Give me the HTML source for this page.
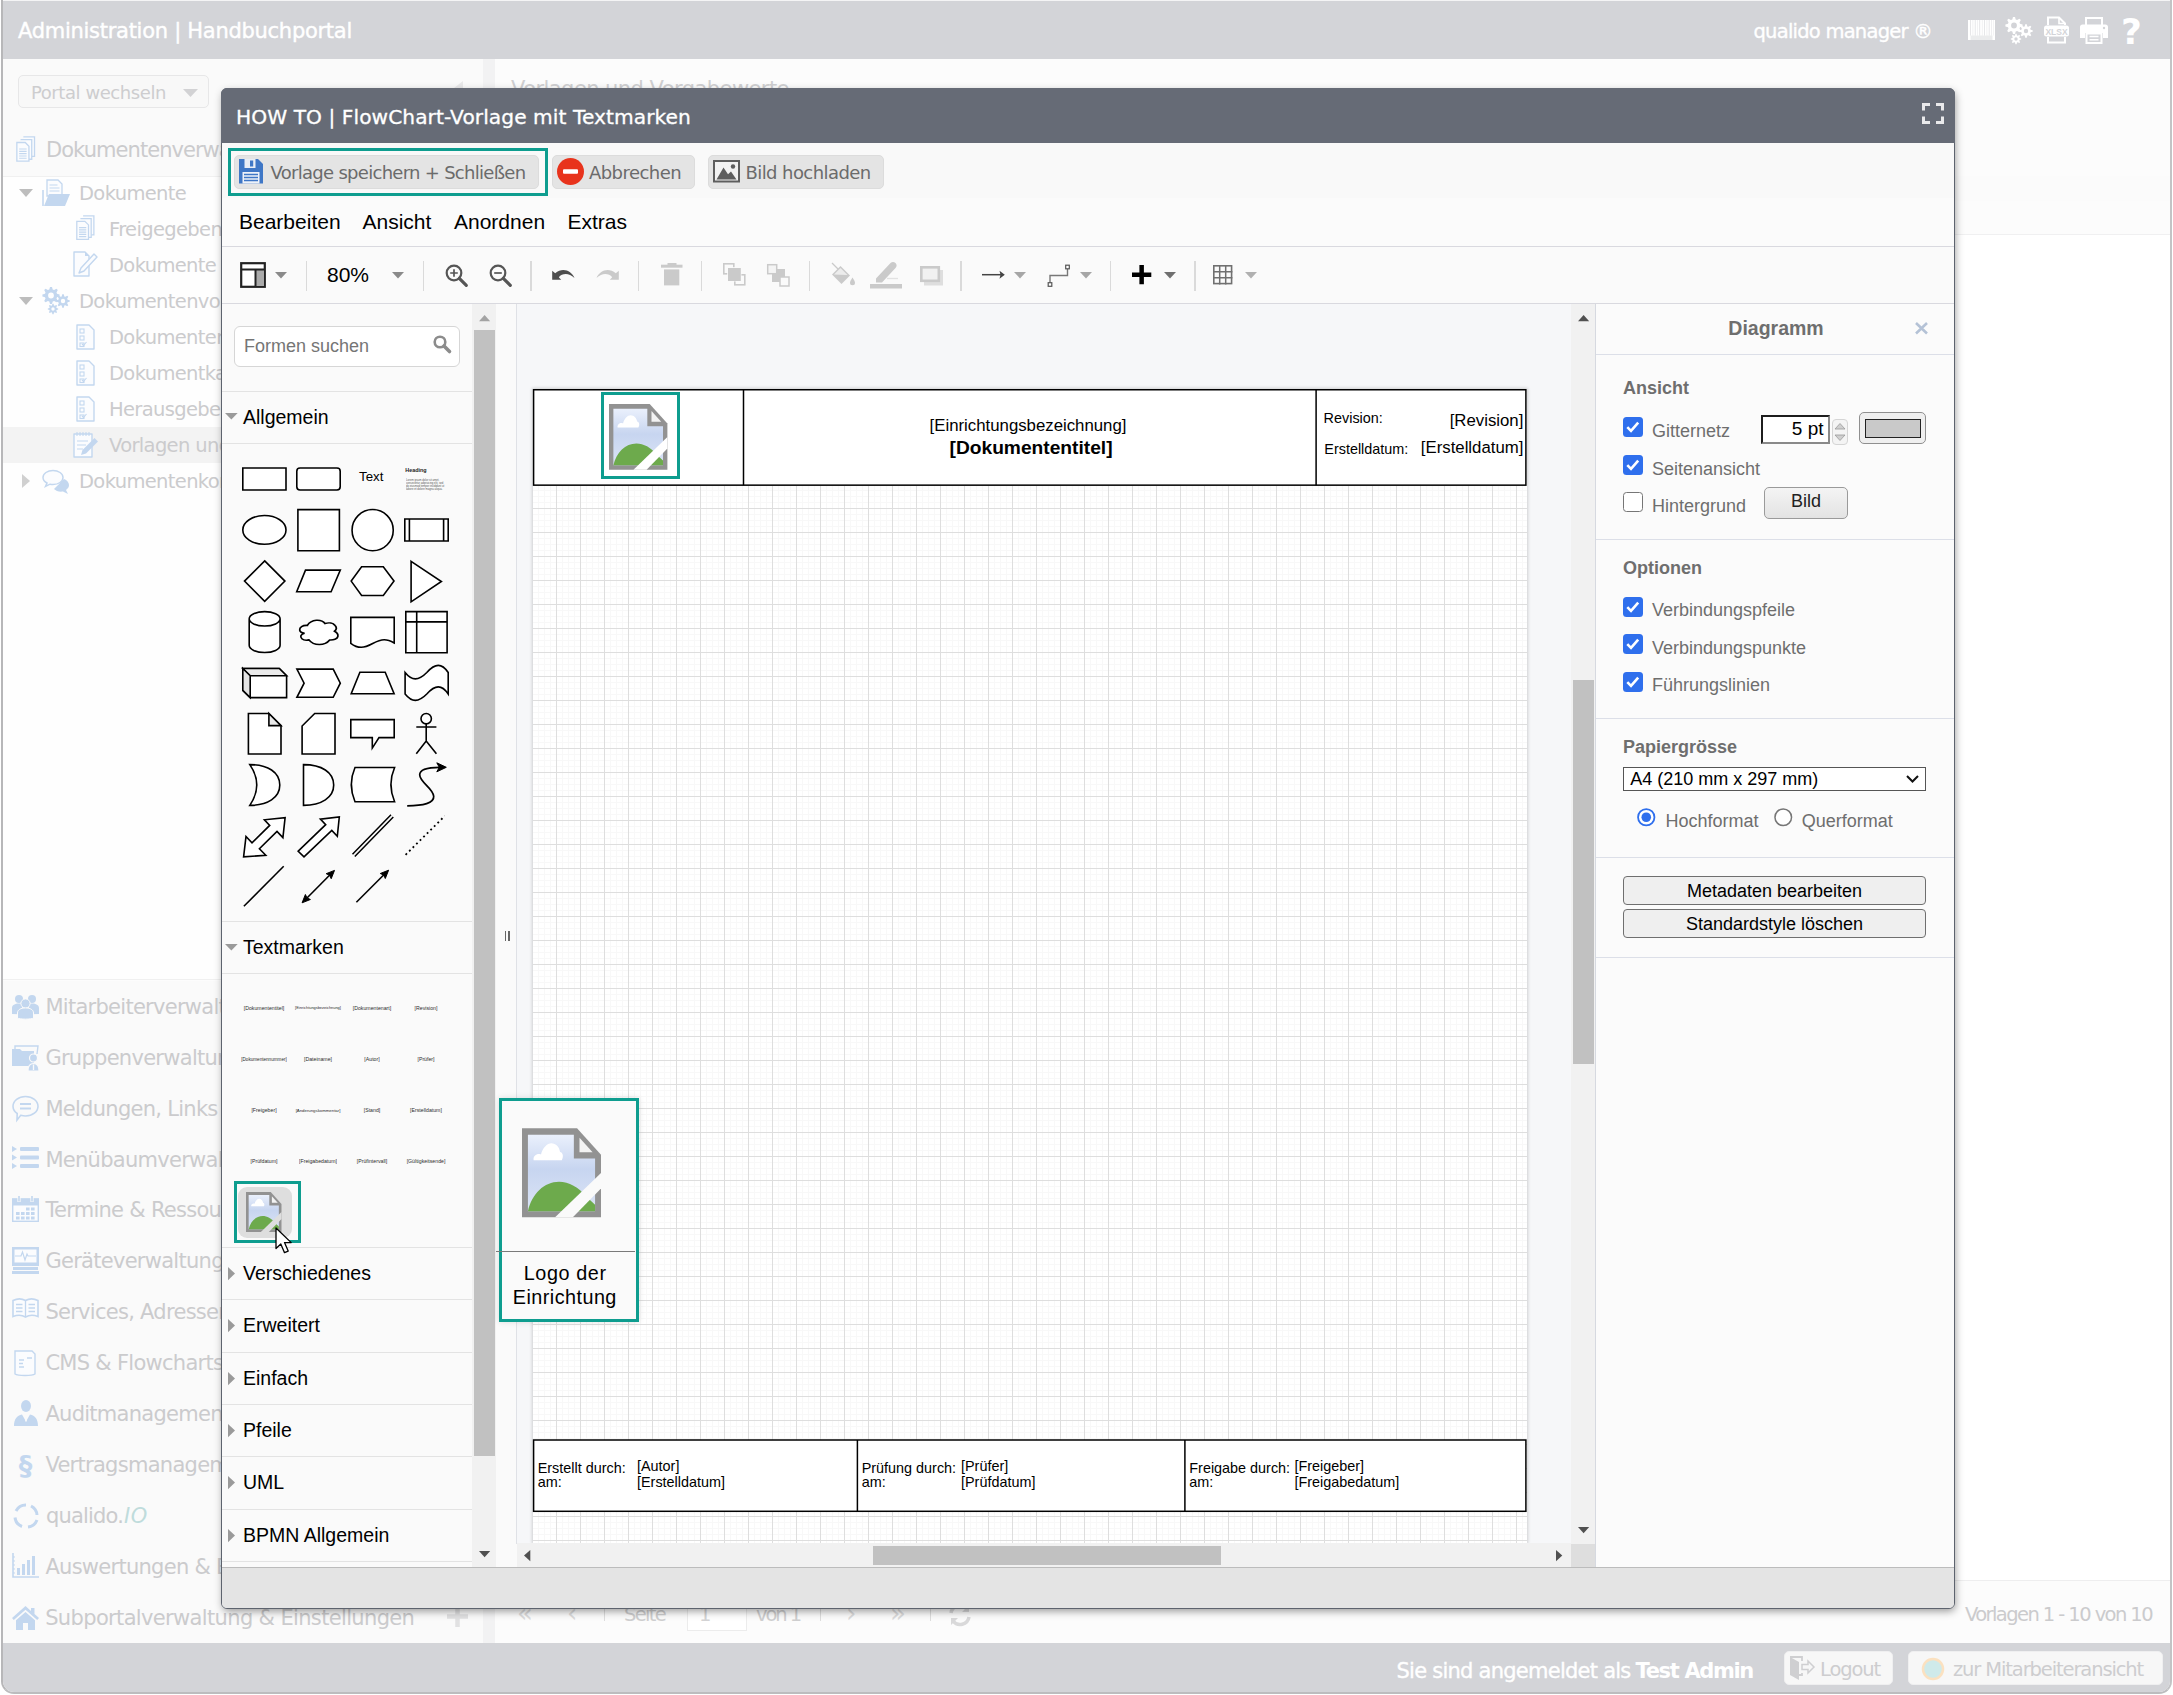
<!DOCTYPE html>
<html lang="de">
<head>
<meta charset="utf-8">
<title>HOW TO | FlowChart-Vorlage mit Textmarken</title>
<style>
*{box-sizing:border-box;margin:0;padding:0}
html,body{width:2173px;height:1695px;overflow:hidden;background:#fff}
body{position:relative;font-family:"Liberation Sans",sans-serif;color:#000}
.t{position:absolute;white-space:pre;line-height:1}
svg{overflow:visible}

</style>
</head>
<body>
<!-- p_app -->
<div style="position:absolute;left:1px;top:-2px;width:2171px;height:1696px;background:#fcfcfc;border:2px solid;border-color:#b7b7b9 #c3c3c5 #bcbcbe #b7b7b9;border-radius:0 0 13px 13px"></div>
<div style="position:absolute;left:3px;top:1px;width:2167px;height:58px;background:#d3d4d8"></div>
<div style="position:absolute;left:3px;top:1643px;width:2167px;height:49px;background:#d3d4d8;border-radius:0 0 11px 11px"></div>
<div style="position:absolute;left:3px;top:59px;width:480px;height:117px;background:#fafafa"></div>
<div style="position:absolute;left:3px;top:176px;width:480px;height:804px;background:#fefefe;border-top:1px solid #f0f0f0;border-bottom:1px solid #f0f0f0"></div>
<div style="position:absolute;left:3px;top:981px;width:480px;height:662px;background:#fafafa"></div>
<div style="position:absolute;left:483px;top:59px;width:12px;height:1584px;background:#f2f2f3"></div>
<div style="position:absolute;left:495px;top:59px;width:1675px;height:117px;background:#fcfcfc"></div>
<div style="position:absolute;left:495px;top:176px;width:1675px;height:25px;background:#fbfbfb"></div>
<div style="position:absolute;left:495px;top:201px;width:1675px;height:34px;background:#fcfcfc;border-bottom:1px solid #f0f0f1"></div>
<div style="position:absolute;left:495px;top:235px;width:1675px;height:1345px;background:#fff"></div>
<div style="position:absolute;left:495px;top:1580px;width:1675px;height:63px;background:#fcfcfc;border-top:1px solid #eeeeef"></div>
<div style="position:absolute;left:3px;top:0px;width:2167px;height:1px;background:#f4f4f5"></div>
<span class="t" style="left:18.0px;top:21.0px;font-size:21px;color:#fff;font-family:'DejaVu Sans','Liberation Sans',sans-serif;letter-spacing:-0.28px;-webkit-text-stroke:.4px #fff;">Administration | Handbuchportal</span>
<span class="t" style="left:1753.5px;top:22.0px;font-size:19.5px;color:#fff;font-family:'DejaVu Sans','Liberation Sans',sans-serif;letter-spacing:-0.76px;-webkit-text-stroke:.35px #fff;">qualido manager ®</span>
<svg style="position:absolute;left:1968px;top:20px;" width="27" height="20" viewBox="0 0 27 20"><rect width="27" height="20" fill="#fff"/><rect x="2.2" y="0" width="0.7" height="15.500" fill="#d3d4d8" opacity="0.8"/><rect x="4.6" y="0" width="0.6" height="15.500" fill="#d3d4d8" opacity="0.5"/><rect x="6.8" y="0" width="0.8" height="15.500" fill="#d3d4d8" opacity="0.7"/><rect x="9.3" y="0" width="0.6" height="15.500" fill="#d3d4d8" opacity="0.5"/><rect x="11.4" y="0" width="0.7" height="15.500" fill="#d3d4d8" opacity="0.8"/><rect x="13.9" y="0" width="0.6" height="15.500" fill="#d3d4d8" opacity="0.5"/><rect x="16" y="0" width="0.8" height="15.500" fill="#d3d4d8" opacity="0.7"/><rect x="18.6" y="0" width="0.6" height="15.500" fill="#d3d4d8" opacity="0.5"/><rect x="20.8" y="0" width="0.7" height="15.500" fill="#d3d4d8" opacity="0.8"/><rect x="23.3" y="0" width="0.6" height="15.500" fill="#d3d4d8" opacity="0.6"/><rect x="25" y="0" width="0.5" height="15.500" fill="#d3d4d8" opacity="0.5"/><rect x="2.500" y="15.500" width="22" height="4.500" fill="#d3d4d8" opacity=".45"/></svg>
<svg style="position:absolute;left:2005px;top:17px;" width="28.0" height="27.0" viewBox="0 0 28 27"><path d="M17.6 7.5L17.6 9.5L15.0 10.2L14.5 11.6L15.8 13.9L14.4 15.3L12.1 14.0L10.7 14.5L10.0 17.1L8.0 17.1L7.3 14.5L5.9 14.0L3.6 15.3L2.2 13.9L3.5 11.6L3.0 10.2L0.4 9.5L0.4 7.5L3.0 6.8L3.5 5.4L2.2 3.1L3.6 1.7L5.9 3.0L7.3 2.5L8.0 -0.1L10.0 -0.1L10.7 2.5L12.1 3.0L14.4 1.7L15.8 3.1L14.5 5.4L15.0 6.8ZM11.9 8.5A2.9 2.9 0 1 0 6.1 8.5A2.9 2.9 0 1 0 11.9 8.5Z" fill="#fff" fill-rule="evenodd"/><path d="M27.7 13.2L27.7 14.8L25.6 15.3L25.2 16.4L26.3 18.2L25.2 19.3L23.4 18.2L22.3 18.6L21.8 20.7L20.2 20.7L19.7 18.6L18.6 18.2L16.8 19.3L15.7 18.2L16.8 16.4L16.4 15.3L14.3 14.8L14.3 13.2L16.4 12.7L16.8 11.6L15.7 9.8L16.8 8.7L18.6 9.8L19.7 9.4L20.2 7.3L21.8 7.3L22.3 9.4L23.4 9.8L25.2 8.7L26.3 9.8L25.2 11.6L25.6 12.7ZM23.2 14.0A2.2 2.2 0 1 0 18.8 14.0A2.2 2.2 0 1 0 23.2 14.0Z" fill="#fff" fill-rule="evenodd"/><path d="M16.2 21.4L16.2 22.6L14.6 23.0L14.3 23.8L15.1 25.2L14.2 26.1L12.8 25.3L12.0 25.6L11.6 27.2L10.4 27.2L10.0 25.6L9.2 25.3L7.8 26.1L6.9 25.2L7.7 23.8L7.4 23.0L5.8 22.6L5.8 21.4L7.4 21.0L7.7 20.2L6.9 18.8L7.8 17.9L9.2 18.7L10.0 18.4L10.4 16.8L11.6 16.8L12.0 18.4L12.8 18.7L14.2 17.9L15.1 18.8L14.3 20.2L14.6 21.0ZM12.7 22.0A1.7 1.7 0 1 0 9.3 22.0A1.7 1.7 0 1 0 12.7 22.0Z" fill="#fff" fill-rule="evenodd"/></svg>
<svg style="position:absolute;left:2044px;top:16px;" width="25" height="28" viewBox="0 0 25 28"><path d="M4 9v-7.500h11l6 6v1.500M21 21v5.500h-17v-5.500" fill="none" stroke="#fff" stroke-width="2"/><path d="M15 1.500v6h6" fill="none" stroke="#fff" stroke-width="1.600"/><rect x="0" y="9.500" width="25" height="11" rx="2.500" fill="#fff"/><text x="12.500" y="18.500" font-family="Liberation Sans,sans-serif" font-size="8.500" font-weight="700" fill="#d3d4d8" text-anchor="middle">XLSX</text></svg>
<svg style="position:absolute;left:2080px;top:17px;" width="28" height="27" viewBox="0 0 28 27"><path d="M6 8v-7h16v7" fill="none" stroke="#fff" stroke-width="2"/><path d="M0 10c0-1.500 1-2.500 2.500-2.500h23c1.500 0 2.500 1 2.500 2.500v11h-5v-5h-18v5h-5z" fill="#fff"/><rect x="6.500" y="16.500" width="15" height="9.500" fill="none" stroke="#fff" stroke-width="2"/><path d="M9.500 19.500h9M9.500 22.700h9" stroke="#fff" stroke-width="1.500"/><circle cx="24" cy="11" r="1.200" fill="#d3d4d8"/></svg>
<span class="t" style="left:2121.1px;top:14.0px;font-size:36px;color:#fff;font-family:'DejaVu Sans','Liberation Sans',sans-serif;font-weight:700;">?</span>
<div style="position:absolute;left:18px;top:74.5px;width:191px;height:33.5px;background:#f8f8f8;border:1.300px solid #e7e7e8;border-radius:5px"></div>
<span class="t" style="left:31.0px;top:84.0px;font-size:18px;color:#cdcdcf;font-family:'DejaVu Sans','Liberation Sans',sans-serif;letter-spacing:-0.43px;">Portal wechseln</span>
<svg style="position:absolute;left:183px;top:88.5px;" width="15" height="8" viewBox="0 0 15 8"><path d="M0 0h15l-7.500 8z" fill="#d2d2d4"/></svg>
<svg style="position:absolute;left:454px;top:81px;" width="9" height="14" viewBox="0 0 9 14"><path d="M9 0v14l-9-7z" fill="#e9e9ea"/></svg>
<svg style="position:absolute;left:15px;top:136px;" width="22.32" height="26.970000000000002" viewBox="0 0 24 29"><g fill="#fbfcfe" stroke="#c3d7ef" stroke-width="1.4"><path d="M9 1h12v21h-3"/><path d="M6 4h12v21h-3"/><path d="M2 7h9l4 4v16h-13z"/></g><g stroke="#c3d7ef" stroke-width="1.2"><path d="M4.5 14h8M4.5 16.5h8M4.5 19h8M4.5 21.5h8M4.5 24h8"/></g></svg>
<span class="t" style="left:46.0px;top:140.0px;font-size:21px;color:#cbcbcd;font-family:'DejaVu Sans','Liberation Sans',sans-serif;letter-spacing:-0.95px;">Dokumentenverwaltung</span>
<div style="position:absolute;left:3px;top:427px;width:480px;height:36px;background:#f3f3f3"></div>
<svg style="position:absolute;left:19px;top:189.0px;" width="14" height="8" viewBox="0 0 14 8"><path d="M0 0h14l-7 8z" fill="#bdbdbd"/></svg>
<svg style="position:absolute;left:41px;top:178.5px;" width="30" height="28" viewBox="0 0 30 28"><g fill="#fbfcfe" stroke="#c3d7ef" stroke-width="1.3"><path d="M6 1h11l4 4v12h-15z"/></g><path d="M8.5 6h8M8.5 9h10M8.5 12h10" stroke="#c3d7ef" stroke-width="1.1"/><path d="M2 11v16" stroke="#c3d7ef" stroke-width="1.6"/><path d="M8 15h21l-5 12h-21z" fill="#c3d7ef"/></svg>
<span class="t" style="left:79.0px;top:184.0px;font-size:19.5px;color:#cbcbcd;font-family:'DejaVu Sans','Liberation Sans',sans-serif;letter-spacing:-0.65px;">Dokumente</span>
<svg style="position:absolute;left:75px;top:214.5px;" width="21.6" height="26.1" viewBox="0 0 24 29"><g fill="#fbfcfe" stroke="#c3d7ef" stroke-width="1.4"><path d="M9 1h12v21h-3"/><path d="M6 4h12v21h-3"/><path d="M2 7h9l4 4v16h-13z"/></g><g stroke="#c3d7ef" stroke-width="1.2"><path d="M4.5 14h8M4.5 16.5h8M4.5 19h8M4.5 21.5h8M4.5 24h8"/></g></svg>
<span class="t" style="left:109.0px;top:220.0px;font-size:19.5px;color:#cbcbcd;font-family:'DejaVu Sans','Liberation Sans',sans-serif;letter-spacing:-0.65px;">Freigegebene Dokumente</span>
<svg style="position:absolute;left:72px;top:249.5px;" width="27" height="28" viewBox="0 0 27 28"><path d="M2 2h11l4 4v20h-15z" fill="#fbfcfe" stroke="#c3d7ef" stroke-width="1.4" stroke-linejoin="round"/><path d="M13 2l4 4h-4z" fill="#c3d7ef"/><path d="M7 23l2-5 13-14 3 3-13 14z" fill="#fbfcfe" stroke="#c3d7ef" stroke-width="1.4" stroke-linejoin="round"/></svg>
<span class="t" style="left:109.0px;top:256.0px;font-size:19.5px;color:#cbcbcd;font-family:'DejaVu Sans','Liberation Sans',sans-serif;letter-spacing:-0.65px;">Dokumente in Bearbeitung</span>
<svg style="position:absolute;left:19px;top:297.0px;" width="14" height="8" viewBox="0 0 14 8"><path d="M0 0h14l-7 8z" fill="#bdbdbd"/></svg>
<svg style="position:absolute;left:42px;top:286.5px;" width="28.0" height="27.0" viewBox="0 0 28 27"><path d="M17.6 7.5L17.6 9.5L15.0 10.2L14.5 11.6L15.8 13.9L14.4 15.3L12.1 14.0L10.7 14.5L10.0 17.1L8.0 17.1L7.3 14.5L5.9 14.0L3.6 15.3L2.2 13.9L3.5 11.6L3.0 10.2L0.4 9.5L0.4 7.5L3.0 6.8L3.5 5.4L2.2 3.1L3.6 1.7L5.9 3.0L7.3 2.5L8.0 -0.1L10.0 -0.1L10.7 2.5L12.1 3.0L14.4 1.7L15.8 3.1L14.5 5.4L15.0 6.8ZM11.9 8.5A2.9 2.9 0 1 0 6.1 8.5A2.9 2.9 0 1 0 11.9 8.5Z" fill="#c3d7ef" fill-rule="evenodd"/><path d="M27.7 13.2L27.7 14.8L25.6 15.3L25.2 16.4L26.3 18.2L25.2 19.3L23.4 18.2L22.3 18.6L21.8 20.7L20.2 20.7L19.7 18.6L18.6 18.2L16.8 19.3L15.7 18.2L16.8 16.4L16.4 15.3L14.3 14.8L14.3 13.2L16.4 12.7L16.8 11.6L15.7 9.8L16.8 8.7L18.6 9.8L19.7 9.4L20.2 7.3L21.8 7.3L22.3 9.4L23.4 9.8L25.2 8.7L26.3 9.8L25.2 11.6L25.6 12.7ZM23.2 14.0A2.2 2.2 0 1 0 18.8 14.0A2.2 2.2 0 1 0 23.2 14.0Z" fill="#c3d7ef" fill-rule="evenodd"/><path d="M16.2 21.4L16.2 22.6L14.6 23.0L14.3 23.8L15.1 25.2L14.2 26.1L12.8 25.3L12.0 25.6L11.6 27.2L10.4 27.2L10.0 25.6L9.2 25.3L7.8 26.1L6.9 25.2L7.7 23.8L7.4 23.0L5.8 22.6L5.8 21.4L7.4 21.0L7.7 20.2L6.9 18.8L7.8 17.9L9.2 18.7L10.0 18.4L10.4 16.8L11.6 16.8L12.0 18.4L12.8 18.7L14.2 17.9L15.1 18.8L14.3 20.2L14.6 21.0ZM12.7 22.0A1.7 1.7 0 1 0 9.3 22.0A1.7 1.7 0 1 0 12.7 22.0Z" fill="#c3d7ef" fill-rule="evenodd"/></svg>
<span class="t" style="left:79.0px;top:292.0px;font-size:19.5px;color:#cbcbcd;font-family:'DejaVu Sans','Liberation Sans',sans-serif;letter-spacing:-0.65px;">Dokumentenvorgaben</span>
<svg style="position:absolute;left:75px;top:322.5px;" width="21" height="28" viewBox="0 0 21 28"><path d="M2 2h12l5 5v19h-17z" fill="#fbfcfe" stroke="#c3d7ef" stroke-width="1.4" stroke-linejoin="round"/><g fill="none" stroke="#c3d7ef" stroke-width="1.1"><rect x="5" y="6" width="4" height="4"/><rect x="5" y="13" width="4" height="4"/><rect x="5" y="20" width="4" height="3.5"/><path d="M7 21l1.5 1.5 3-3.5"/></g></svg>
<span class="t" style="left:109.0px;top:328.0px;font-size:19.5px;color:#cbcbcd;font-family:'DejaVu Sans','Liberation Sans',sans-serif;letter-spacing:-0.65px;">Dokumentenarten</span>
<svg style="position:absolute;left:75px;top:358.5px;" width="21" height="28" viewBox="0 0 21 28"><path d="M2 2h12l5 5v19h-17z" fill="#fbfcfe" stroke="#c3d7ef" stroke-width="1.4" stroke-linejoin="round"/><g fill="none" stroke="#c3d7ef" stroke-width="1.1"><rect x="5" y="6" width="4" height="4"/><rect x="5" y="13" width="4" height="4"/><rect x="5" y="20" width="4" height="3.5"/><path d="M7 21l1.5 1.5 3-3.5"/></g></svg>
<span class="t" style="left:109.0px;top:364.0px;font-size:19.5px;color:#cbcbcd;font-family:'DejaVu Sans','Liberation Sans',sans-serif;letter-spacing:-0.65px;">Dokumentkategorien</span>
<svg style="position:absolute;left:75px;top:394.5px;" width="21" height="28" viewBox="0 0 21 28"><path d="M2 2h12l5 5v19h-17z" fill="#fbfcfe" stroke="#c3d7ef" stroke-width="1.4" stroke-linejoin="round"/><g fill="none" stroke="#c3d7ef" stroke-width="1.1"><rect x="5" y="6" width="4" height="4"/><rect x="5" y="13" width="4" height="4"/><rect x="5" y="20" width="4" height="3.5"/><path d="M7 21l1.5 1.5 3-3.5"/></g></svg>
<span class="t" style="left:109.0px;top:400.0px;font-size:19.5px;color:#cbcbcd;font-family:'DejaVu Sans','Liberation Sans',sans-serif;letter-spacing:-0.65px;">Herausgeber</span>
<svg style="position:absolute;left:72px;top:430.5px;" width="27" height="28" viewBox="0 0 27 28"><path d="M2 3h18v23h-18z" fill="#fbfcfe" stroke="#c3d7ef" stroke-width="1.4" stroke-linejoin="round"/><path d="M5 1v4M8 1v4M11 1v4M14 1v4M17 1v4M5 10h11M5 14h9M5 18h6" stroke="#c3d7ef" stroke-width="1.1"/><path d="M9 24l1.5-5 12-12 3.5 3.5-12 12z" fill="#c3d7ef"/></svg>
<span class="t" style="left:109.0px;top:436.0px;font-size:19.5px;color:#cbcbcd;font-family:'DejaVu Sans','Liberation Sans',sans-serif;letter-spacing:-0.65px;">Vorlagen und Vorgabewerte</span>
<svg style="position:absolute;left:22px;top:473.5px;" width="8" height="14" viewBox="0 0 8 14"><path d="M0 0v14l8-7z" fill="#d0d0d0"/></svg>
<svg style="position:absolute;left:42px;top:468.5px;" width="28" height="26" viewBox="0 0 28 26"><path d="M22 10c3 1 5 3.500 5 6 0 2-1 3.500-3 5l2 4-5-2.500c-4 .5-7-.5-9-2.500" fill="#c3d7ef"/><path d="M11 1.500c5.500 0 10 3 10 7s-4.500 7-10 7c-1 0-2-.1-3-.3l-4.500 2.300 1.500-3.500c-2.500-1.300-4-3.300-4-5.500 0-4 4.500-7 10-7z" fill="#fbfcfe" stroke="#c3d7ef" stroke-width="1.5"/></svg>
<span class="t" style="left:79.0px;top:472.0px;font-size:19.5px;color:#cbcbcd;font-family:'DejaVu Sans','Liberation Sans',sans-serif;letter-spacing:-0.65px;">Dokumentenkommentare</span>
<svg style="position:absolute;left:12px;top:993px;" width="27" height="27" viewBox="0 0 27 27"><g fill="#c3d7ef"><circle cx="7" cy="6" r="4"/><circle cx="20" cy="6" r="4"/><path d="M0 21v-6c0-3 3-4.500 7-4.500 1.500 0 3 .3 4 .8l-3 10zM27 21v-6c0-3-3-4.500-7-4.500-1.500 0-3 .3-4 .8l3 10z"/><circle cx="13.500" cy="10.500" r="4.600" stroke="#fafafa" stroke-width="1"/><path d="M5.500 25v-5c0-3.500 3.500-5 8-5s8 1.500 8 5v5c-2 1.500-14 1.500-16 0z" stroke="#fafafa" stroke-width="1"/></g></svg>
<span class="t" style="left:45.4px;top:997.0px;font-size:21px;color:#cbcbcd;font-family:'DejaVu Sans','Liberation Sans',sans-serif;letter-spacing:-0.72px;">Mitarbeiterverwaltung</span>
<svg style="position:absolute;left:12px;top:1043.8px;" width="28" height="28" viewBox="0 0 28 28"><path d="M3 5v-3h23l-1 8" fill="none" stroke="#c3d7ef" stroke-width="1.4"/><path d="M0 5h8l2 2h12v15h-22z" fill="#c3d7ef"/><circle cx="21.500" cy="14" r="4" fill="#c3d7ef" stroke="#fafafa" stroke-width="1.2"/><path d="M16 27c0-5 2-7.500 5.500-7.500s5.500 2.500 5.500 7.500z" fill="#c3d7ef" stroke="#fafafa" stroke-width="1.200"/><path d="M21.500 20.500v5.500" stroke="#fafafa" stroke-width="1.3"/></svg>
<span class="t" style="left:45.4px;top:1048.0px;font-size:21px;color:#cbcbcd;font-family:'DejaVu Sans','Liberation Sans',sans-serif;letter-spacing:-0.72px;">Gruppenverwaltung</span>
<svg style="position:absolute;left:12px;top:1094.7px;" width="27" height="27" viewBox="0 0 27 27"><path d="M13.500 1.500c7 0 12.500 4.300 12.500 9.800s-5.500 9.700-12.500 9.700c-1.700 0-3.300-.3-4.800-.7l-3.700 4.700.2-6.500c-2.700-1.800-4.200-4.300-4.200-7.200 0-5.500 5.500-9.800 12.500-9.800z" fill="none" stroke="#c3d7ef" stroke-width="1.6"/><path d="M8 9h11M8 13.500h11" stroke="#c3d7ef" stroke-width="1.800"/></svg>
<span class="t" style="left:45.4px;top:1099.0px;font-size:21px;color:#cbcbcd;font-family:'DejaVu Sans','Liberation Sans',sans-serif;letter-spacing:-0.72px;">Meldungen, Links &amp; News</span>
<svg style="position:absolute;left:12px;top:1145.5px;" width="27" height="23" viewBox="0 0 27 23"><g fill="#c3d7ef"><path d="M0 0l5 3-5 3zM0 8.500l5 3-5 3zM0 17l5 3-5 3z"/><rect x="8" y="1" width="19" height="4" rx="1"/><rect x="8" y="9.500" width="19" height="4" rx="1"/><rect x="8" y="18" width="19" height="4" rx="1"/></g></svg>
<span class="t" style="left:45.4px;top:1150.0px;font-size:21px;color:#cbcbcd;font-family:'DejaVu Sans','Liberation Sans',sans-serif;letter-spacing:-0.72px;">Menübaumverwaltung</span>
<svg style="position:absolute;left:12px;top:1196.4px;" width="27" height="26" viewBox="0 0 27 26"><rect x=".7" y="3" width="25.600" height="22.300" fill="#fbfcfe" stroke="#c3d7ef" stroke-width="1.400"/><rect x="0" y="2.500" width="27" height="7" fill="#c3d7ef"/><path d="M7 0v6M20 0v6" stroke="#fafafa" stroke-width="3.200"/><path d="M7 0v5.500M20 0v5.500" stroke="#c3d7ef" stroke-width="1.600"/><g fill="#c3d7ef"><rect x="14" y="11.500" width="3.600" height="3"/><rect x="19" y="11.500" width="3.600" height="3"/><rect x="4" y="16" width="3.600" height="3"/><rect x="9" y="16" width="3.600" height="3"/><rect x="14" y="16" width="3.600" height="3"/><rect x="19" y="16" width="3.600" height="3"/><rect x="4" y="20.500" width="3.600" height="3"/><rect x="9" y="20.500" width="3.600" height="3"/><rect x="14" y="20.500" width="3.600" height="3"/><rect x="19" y="20.500" width="3.600" height="3"/></g></svg>
<span class="t" style="left:45.4px;top:1200.0px;font-size:21px;color:#cbcbcd;font-family:'DejaVu Sans','Liberation Sans',sans-serif;letter-spacing:-0.72px;">Termine &amp; Ressourcen</span>
<svg style="position:absolute;left:12px;top:1247.3px;" width="27" height="27" viewBox="0 0 27 27"><path d="M0 0h27v19h-27z" fill="#c3d7ef"/><rect x="2.500" y="2.500" width="22" height="13" fill="#fbfcfe"/><path d="M3 9h6l1.500-4 2.500 8 2-6 1 2h8" fill="none" stroke="#c3d7ef" stroke-width="1.200"/><rect x="1" y="20" width="25" height="3" fill="#c3d7ef"/><rect x="0" y="24" width="27" height="3" fill="#c3d7ef"/></svg>
<span class="t" style="left:45.4px;top:1251.0px;font-size:21px;color:#cbcbcd;font-family:'DejaVu Sans','Liberation Sans',sans-serif;letter-spacing:-0.72px;">Geräteverwaltung</span>
<svg style="position:absolute;left:12px;top:1298.2px;" width="27" height="21" viewBox="0 0 27 21"><path d="M1 2.500c4-2 9-2 12.500 0 3.500-2 8.500-2 12.500 0v16c-4-1.500-9-1.500-12.500 .5-3.500-2-8.500-2-12.500-.5z" fill="#fbfcfe" stroke="#c3d7ef" stroke-width="1.600"/><path d="M13.500 2.500v16.500M4 6.500h6.500M4 10h6.500M4 13.500h6.500M16.500 6.500h6.500M16.500 10h6.500M16.500 13.500h6.500" stroke="#c3d7ef" stroke-width="1.300"/></svg>
<span class="t" style="left:45.4px;top:1302.0px;font-size:21px;color:#cbcbcd;font-family:'DejaVu Sans','Liberation Sans',sans-serif;letter-spacing:-0.72px;">Services, Adressen &amp; Kontakte</span>
<svg style="position:absolute;left:12px;top:1349px;" width="26" height="28" viewBox="0 0 26 28"><path d="M3 2h17l3 3v20c-3 2-17 2-20 0z" fill="#fbfcfe" stroke="#c3d7ef" stroke-width="1.400"/><path d="M7 11h5M7 14.500h4M7 18h5M15 9h5" stroke="#c3d7ef" stroke-width="1.500"/></svg>
<span class="t" style="left:45.4px;top:1353.0px;font-size:21px;color:#cbcbcd;font-family:'DejaVu Sans','Liberation Sans',sans-serif;letter-spacing:-0.72px;">CMS &amp; Flowcharts</span>
<svg style="position:absolute;left:14px;top:1399.9px;" width="24" height="26" viewBox="0 0 24 26"><g fill="#c3d7ef"><ellipse cx="12" cy="6" rx="5" ry="6"/><path d="M0 26c0-7 3-10.500 8-11.500l4 7 4-7c5 1 8 4.500 8 11.500z"/></g><path d="M12 15.500v6" stroke="#fafafa" stroke-width="1.500"/></svg>
<span class="t" style="left:45.4px;top:1404.0px;font-size:21px;color:#cbcbcd;font-family:'DejaVu Sans','Liberation Sans',sans-serif;letter-spacing:-0.72px;">Auditmanagement</span>
<span class="t" style="left:18.8px;top:1452.0px;font-size:27px;color:#c3d7ef;font-family:'DejaVu Sans','Liberation Sans',sans-serif;font-weight:700;">§</span>
<span class="t" style="left:45.4px;top:1455.0px;font-size:21px;color:#cbcbcd;font-family:'DejaVu Sans','Liberation Sans',sans-serif;letter-spacing:-0.72px;">Vertragsmanagement</span>
<svg style="position:absolute;left:12px;top:1501.7px;" width="28" height="28" viewBox="0 0 28 28"><g fill="none" stroke="#c3d7ef" stroke-width="3"><path d="M4 9a11 11 0 0 1 10-6" /><path d="M19 4a11 11 0 0 1 6 9"/><path d="M25 18a11 11 0 0 1-9 7"/><path d="M10 24.500a11 11 0 0 1-7-9"/></g></svg>
<span class="t" style="left:46.0px;top:1506.0px;font-size:21px;color:#cbcbcd;font-family:'DejaVu Sans','Liberation Sans',sans-serif;letter-spacing:-0.83px;">qualido.</span>
<span class="t" style="left:124.0px;top:1506.0px;font-size:21px;color:#bfdcdc;font-family:'DejaVu Sans','Liberation Sans',sans-serif;letter-spacing:0.63px;font-style:italic;">IO</span>
<svg style="position:absolute;left:12px;top:1552.6px;" width="27" height="25" viewBox="0 0 27 25"><path d="M1 0v24h26" fill="none" stroke="#c3d7ef" stroke-width="1.600"/><g fill="#c3d7ef"><rect x="5" y="15" width="3" height="7"/><rect x="10" y="11" width="3" height="11"/><rect x="15" y="7" width="3" height="15"/><rect x="20" y="3" width="3" height="19"/></g><path d="M1 4h2M1 8h2M1 12h2M1 16h2M1 20h2" stroke="#c3d7ef" stroke-width="1"/></svg>
<span class="t" style="left:45.4px;top:1557.0px;font-size:21px;color:#cbcbcd;font-family:'DejaVu Sans','Liberation Sans',sans-serif;letter-spacing:-0.72px;">Auswertungen &amp; Berichte</span>
<svg style="position:absolute;left:12px;top:1605.0px;" width="27" height="25" viewBox="0 0 27 25"><g fill="#c3d7ef"><path d="M13.500 1l-13.500 12 1.800 2 11.700-10.300 11.700 10.300 1.800-2-4.500-4v-6h-3.500v3z"/><path d="M13.500 7l-9.500 8.300v9.700h7v-7h5v7h7v-9.700z"/></g></svg>
<span class="t" style="left:45.2px;top:1608.0px;font-size:21px;color:#cbcbcd;font-family:'DejaVu Sans','Liberation Sans',sans-serif;letter-spacing:-0.65px;">Subportalverwaltung &amp; Einstellungen</span>
<svg style="position:absolute;left:447px;top:1606px;" width="21" height="21" viewBox="0 0 21 21"><path d="M10.500 0v21M0 10.500h21" stroke="#e1e1e2" stroke-width="4.500"/></svg>
<span class="t" style="left:511.0px;top:79.0px;font-size:21px;color:#cfcfd1;font-family:'DejaVu Sans','Liberation Sans',sans-serif;letter-spacing:-0.56px;">Vorlagen und Vorgabewerte</span>
<span class="t" style="left:517.0px;top:1600.0px;font-size:26px;color:#dcdcdd;font-family:'DejaVu Sans','Liberation Sans',sans-serif;">«</span>
<span class="t" style="left:567.0px;top:1600.0px;font-size:26px;color:#dcdcdd;font-family:'DejaVu Sans','Liberation Sans',sans-serif;">‹</span>
<div style="position:absolute;left:604px;top:1604px;width:1px;height:17px;background:#dedede"></div>
<span class="t" style="left:624.0px;top:1605.0px;font-size:19.5px;color:#cfcfd0;font-family:'DejaVu Sans','Liberation Sans',sans-serif;letter-spacing:-1.69px;">Seite</span>
<div style="position:absolute;left:687px;top:1598px;width:60px;height:33px;background:#fff;border:1px solid #ececec"></div>
<span class="t" style="left:699.0px;top:1605.0px;font-size:19.5px;color:#d4d4d5;font-family:'DejaVu Sans','Liberation Sans',sans-serif;">1</span>
<span class="t" style="left:756.0px;top:1605.0px;font-size:19.5px;color:#cfcfd0;font-family:'DejaVu Sans','Liberation Sans',sans-serif;letter-spacing:-2.09px;">von 1</span>
<div style="position:absolute;left:820px;top:1604px;width:1px;height:17px;background:#dedede"></div>
<span class="t" style="left:846.0px;top:1600.0px;font-size:26px;color:#dcdcdd;font-family:'DejaVu Sans','Liberation Sans',sans-serif;">›</span>
<span class="t" style="left:890.0px;top:1600.0px;font-size:26px;color:#dcdcdd;font-family:'DejaVu Sans','Liberation Sans',sans-serif;">»</span>
<div style="position:absolute;left:930px;top:1604px;width:1px;height:17px;background:#dedede"></div>
<svg style="position:absolute;left:948px;top:1603px;" width="24" height="24" viewBox="0 0 24 24"><path d="M3 10a9 9 0 0 1 16-4M21 14a9 9 0 0 1-16 4" fill="none" stroke="#d9d9da" stroke-width="3.500"/><path d="M21 2v7h-7zM3 22v-7h7z" fill="#d9d9da"/></svg>
<span class="t" style="left:1965.0px;top:1605.0px;font-size:19.5px;color:#cbcbcd;font-family:'DejaVu Sans','Liberation Sans',sans-serif;letter-spacing:-1.58px;">Vorlagen 1 - 10 von 10</span>
<span class="t" style="left:1396.5px;top:1661.0px;font-size:21px;color:#fff;font-family:'DejaVu Sans','Liberation Sans',sans-serif;letter-spacing:-0.75px;-webkit-text-stroke:.35px #fff;">Sie sind angemeldet als </span>
<span class="t" style="left:1635.5px;top:1661.0px;font-size:21px;color:#fff;font-family:'DejaVu Sans','Liberation Sans',sans-serif;font-weight:700;letter-spacing:-1.35px;">Test Admin</span>
<div style="position:absolute;left:1784px;top:1651px;width:109px;height:34px;background:#f7f7f7;border:1px solid #efeff0;border-radius:5px"></div>
<svg style="position:absolute;left:1789px;top:1656px;" width="26" height="24" viewBox="0 0 26 24"><path d="M1 1h12v4M13 17v2h-4" fill="none" stroke="#cfcfd1" stroke-width="1.800"/><path d="M1 1l9 5v18l-9-5z" fill="#cfcfd1"/><path d="M13 8.500h6v-3.500l6 6-6 6v-3.500h-6z" fill="#f7f7f7" stroke="#cfcfd1" stroke-width="1.500"/></svg>
<span class="t" style="left:1820.0px;top:1660.0px;font-size:19.5px;color:#cdcdcf;font-family:'DejaVu Sans','Liberation Sans',sans-serif;letter-spacing:-1.13px;">Logout</span>
<div style="position:absolute;left:1908px;top:1651px;width:255px;height:34px;background:#f7f7f7;border:1px solid #efeff0;border-radius:5px"></div>
<svg style="position:absolute;left:1921px;top:1656.5px;" width="24" height="24" viewBox="0 0 24 24"><circle cx="12" cy="12" r="10" fill="#cfeaea" stroke="#fbe1c0" stroke-width="2.500"/></svg>
<span class="t" style="left:1953.0px;top:1660.0px;font-size:19.5px;color:#cdcdcf;font-family:'DejaVu Sans','Liberation Sans',sans-serif;letter-spacing:-1.12px;">zur Mitarbeiteransicht</span>
<!-- p_win -->
<div style="position:absolute;left:221px;top:88px;width:1734px;height:1521px;background:#fafafa;border:1px solid #5d636e;border-radius:6px;box-shadow:1px 3px 8px -1px rgba(0,0,0,.42)"></div>
<div style="position:absolute;left:221px;top:88px;width:1734px;height:55px;background:#666b76;border-radius:6px 6px 0 0"></div>
<span class="t" style="left:236.0px;top:107.0px;font-size:20.2px;color:#fff;font-family:'DejaVu Sans','Liberation Sans',sans-serif;letter-spacing:0.06px;-webkit-text-stroke:.3px #fff;">HOW TO | FlowChart-Vorlage mit Textmarken</span>
<svg style="position:absolute;left:1922px;top:103px;" width="22" height="21" viewBox="0 0 22 21"><path d="M1.500 7.500v-6h6.500M14 1.500h6.500v6M20.500 13.500v6h-6.500M8 19.500h-6.500v-6" fill="none" stroke="#e9e9eb" stroke-width="3"/></svg>
<div style="position:absolute;left:222px;top:143px;width:1732px;height:55px;background:#f9f9f9"></div>
<div style="position:absolute;left:228px;top:148px;width:320px;height:48px;border:3px solid #0e9d8f"></div>
<div style="position:absolute;left:234px;top:155px;width:305px;height:34px;background:#e4e4e4;border:1px solid #dcdcdc;border-radius:5px"></div>
<svg style="position:absolute;left:239px;top:159px;" width="24" height="24.5" viewBox="0 0 24 24.5"><path d="M0 0h19l5 5v19.500h-24z" fill="#3f77c6"/><rect x="5.500" y="0" width="11" height="9" fill="#e9eef6"/><rect x="11" y="1.500" width="3.200" height="6" fill="#3f77c6"/><rect x="3.500" y="13" width="17" height="11.500" fill="#eef2f9"/><path d="M5 15.500h14M5 18.500h14M5 21.500h14" stroke="#3f77c6" stroke-width="1.700"/></svg>
<span class="t" style="left:270.5px;top:164.0px;font-size:18px;color:#6b6b6b;font-family:'DejaVu Sans','Liberation Sans',sans-serif;letter-spacing:-0.71px;">Vorlage speichern + Schließen</span>
<div style="position:absolute;left:552px;top:155px;width:143px;height:34px;background:#e4e4e4;border:1px solid #dcdcdc;border-radius:5px"></div>
<svg style="position:absolute;left:557px;top:158px;" width="27" height="27" viewBox="0 0 27 27"><circle cx="13.500" cy="13.500" r="13.500" fill="#e8331c"/><rect x="6" y="11.300" width="15" height="4.400" rx="1" fill="#fff"/></svg>
<span class="t" style="left:589.0px;top:164.0px;font-size:18px;color:#6b6b6b;font-family:'DejaVu Sans','Liberation Sans',sans-serif;letter-spacing:-0.56px;">Abbrechen</span>
<div style="position:absolute;left:708px;top:155px;width:176px;height:34px;background:#e4e4e4;border:1px solid #dcdcdc;border-radius:5px"></div>
<svg style="position:absolute;left:713px;top:160px;" width="27" height="22.5" viewBox="0 0 27 22.5"><rect x="1" y="1" width="25" height="20.500" fill="#f2f2f2" stroke="#5e5e5e" stroke-width="2"/><path d="M3.500 19.500l7-12 4.500 6.800 3-2.800 5.500 8z" fill="#5e5e5e"/><circle cx="20" cy="6.500" r="2.200" fill="#5e5e5e"/></svg>
<span class="t" style="left:745.5px;top:164.0px;font-size:18px;color:#6b6b6b;font-family:'DejaVu Sans','Liberation Sans',sans-serif;letter-spacing:-0.58px;">Bild hochladen</span>
<div style="position:absolute;left:222px;top:198px;width:1732px;height:48px;background:#fbfbfb"></div>
<span class="t" style="left:239.0px;top:211.0px;font-size:21px;color:#000;">Bearbeiten</span>
<span class="t" style="left:362.5px;top:211.0px;font-size:21px;color:#000;">Ansicht</span>
<span class="t" style="left:454.0px;top:211.0px;font-size:21px;color:#000;">Anordnen</span>
<span class="t" style="left:567.5px;top:211.0px;font-size:21px;color:#000;">Extras</span>
<div style="position:absolute;left:222px;top:246px;width:1732px;height:1px;background:#d9d9df"></div>
<div style="position:absolute;left:222px;top:247px;width:1732px;height:56px;background:#fafafa"></div>
<div style="position:absolute;left:222px;top:303px;width:1732px;height:1px;background:#d9d9df"></div>
<div style="position:absolute;left:305.6px;top:261px;width:1.4px;height:30px;background:#dadada"></div>
<div style="position:absolute;left:423.0px;top:261px;width:1.4px;height:30px;background:#dadada"></div>
<div style="position:absolute;left:530.3px;top:261px;width:1.4px;height:30px;background:#dadada"></div>
<div style="position:absolute;left:638.0px;top:261px;width:1.4px;height:30px;background:#dadada"></div>
<div style="position:absolute;left:701.0999999999999px;top:261px;width:1.4px;height:30px;background:#dadada"></div>
<div style="position:absolute;left:808.8px;top:261px;width:1.4px;height:30px;background:#dadada"></div>
<div style="position:absolute;left:960.3px;top:261px;width:1.4px;height:30px;background:#dadada"></div>
<div style="position:absolute;left:1109.7px;top:261px;width:1.4px;height:30px;background:#dadada"></div>
<div style="position:absolute;left:1194.3px;top:261px;width:1.4px;height:30px;background:#dadada"></div>
<svg style="position:absolute;left:240px;top:262px;" width="26" height="26" viewBox="0 0 26 26"><rect x="1.200" y="1.200" width="23.600" height="23.600" fill="#fff" stroke="#222" stroke-width="2.200"/><rect x="15.500" y="8" width="8.500" height="16" fill="#aaa"/><path d="M1 7.500h24M15.500 7.500v17" stroke="#222" stroke-width="2"/></svg>
<svg style="position:absolute;left:274.5px;top:272.3px;" width="12" height="6.4" viewBox="0 0 12 6.4"><path d="M0 0h12l-6 6.400z" fill="#8a8a8a"/></svg>
<span class="t" style="left:327.0px;top:264.0px;font-size:21px;color:#000;">80%</span>
<svg style="position:absolute;left:391.5px;top:272.3px;" width="12" height="6.4" viewBox="0 0 12 6.4"><path d="M0 0h12l-6 6.400z" fill="#8a8a8a"/></svg>
<svg style="position:absolute;left:445px;top:264px;" width="23" height="23" viewBox="0 0 23 23"><circle cx="9" cy="9" r="7.300" fill="none" stroke="#555" stroke-width="2.200"/><path d="M14.300 14.300l7 7" stroke="#555" stroke-width="3.200" stroke-linecap="round"/><path d="M5.200 9h7.600M9 5.200v7.600" stroke="#555" stroke-width="1.700"/></svg>
<svg style="position:absolute;left:489px;top:264px;" width="23" height="23" viewBox="0 0 23 23"><circle cx="9" cy="9" r="7.300" fill="none" stroke="#555" stroke-width="2.200"/><path d="M14.300 14.300l7 7" stroke="#555" stroke-width="3.200" stroke-linecap="round"/><path d="M5.200 9h7.600" stroke="#555" stroke-width="1.700"/></svg>
<svg style="position:absolute;left:552px;top:269px;" width="23" height="11" viewBox="0 0 23 11"><path d="M.2 1.700L.2 10.800L9.200 10.800L6.800 8.200C10 4.500 16.500 3.200 22.500 9C19.500 1.500 10.500-2.200 3.200 4.300Z" fill="#4d4d4d"/></svg>
<svg style="position:absolute;left:596px;top:269px;" width="23" height="11" viewBox="0 0 23 11"><path d="M.2 1.700L.2 10.800L9.200 10.800L6.800 8.200C10 4.500 16.500 3.200 22.500 9C19.500 1.500 10.500-2.200 3.200 4.300Z" fill="#cacaca" transform="translate(23,0) scale(-1,1)"/></svg>
<svg style="position:absolute;left:661px;top:263px;" width="22" height="23" viewBox="0 0 22 23"><rect x="0" y="1.700" width="21.500" height="3" fill="#cacaca"/><rect x="6.500" y="0" width="9" height="3" fill="#cacaca"/><rect x="3" y="6.400" width="15.300" height="16" fill="#cacaca"/></svg>
<svg style="position:absolute;left:723.2px;top:263.1px;" width="22.6" height="22.6" viewBox="0 0 22.6 22.6"><rect x=".800" y=".800" width="10" height="10" fill="none" stroke="#cacaca" stroke-width="1.600"/><rect x="11.800" y="11.800" width="10" height="10" fill="none" stroke="#cacaca" stroke-width="1.600"/><rect x="4.200" y="4.200" width="14.200" height="14.200" fill="#fafafa"/><rect x="5" y="5" width="12.800" height="13" fill="#cacaca"/></svg>
<svg style="position:absolute;left:767.2px;top:263.5px;" width="22.5" height="22.5" viewBox="0 0 22.5 22.5"><rect x="5" y="5" width="13" height="13" fill="#cacaca"/><rect x=".7" y=".7" width="9" height="9" fill="#f4f4f4" stroke="#cacaca" stroke-width="1.500"/><rect x="13" y="13" width="9" height="9" fill="#fafafa" stroke="#cacaca" stroke-width="1.500"/></svg>
<svg style="position:absolute;left:828.5px;top:261.5px;" width="26" height="24" viewBox="0 0 26 24"><path d="M3 1l8 8" stroke="#cacaca" stroke-width="1.200"/><path d="M11.500 4l9.500 9.500-8.500 8.500-9.500-9.500z" fill="#cacaca"/><path d="M5 12.500l6.500-6.500 7 7z" fill="#ececec"/><path d="M23.500 15.500c1.500 2.500 2.500 4 2.500 5.200a2.500 2.500 0 0 1-5 0c0-1.200 1-2.700 2.500-5.200z" fill="#cacaca"/></svg>
<svg style="position:absolute;left:870px;top:261px;" width="32" height="28" viewBox="0 0 32 28"><path d="M6 17.500l14.500-15.500c1.500-1.500 3.500-1.500 5 0s1.500 3.500 0 5l-13.500 14.500h-6z" fill="#cacaca"/><path d="M17 17.500h11" stroke="#e2e2e2" stroke-width="1.300"/><rect x="0" y="23" width="32" height="4.500" fill="#cacaca"/></svg>
<svg style="position:absolute;left:920px;top:266.3px;" width="24" height="20" viewBox="0 0 24 20"><rect x="4" y="4" width="19" height="15.500" fill="#dedede"/><rect x="1.300" y="1.300" width="17.500" height="13.500" fill="#f1f1f1" stroke="#cacaca" stroke-width="2.600"/></svg>
<svg style="position:absolute;left:982px;top:268px;" width="24" height="14" viewBox="0 0 24 14"><path d="M0 6.700h19" stroke="#444" stroke-width="1.500"/><path d="M17.500 2.700l5.300 4-5.300 4 1-4z" fill="#444"/></svg>
<svg style="position:absolute;left:1014.0px;top:272.3px;" width="12" height="6.4" viewBox="0 0 12 6.4"><path d="M0 0h12l-6 6.400z" fill="#a6a6a6"/></svg>
<svg style="position:absolute;left:1047px;top:264px;" width="24" height="24" viewBox="0 0 24 24"><path d="M3 19v-7.500h17.500v-7" fill="none" stroke="#777" stroke-width="1.400"/><rect x="18.700" y="1.200" width="3.600" height="3.600" fill="#fff" stroke="#555" stroke-width="1.200"/><rect x="1.200" y="18.700" width="3.600" height="3.600" fill="#fff" stroke="#555" stroke-width="1.200"/></svg>
<svg style="position:absolute;left:1079.5px;top:272.3px;" width="12" height="6.4" viewBox="0 0 12 6.4"><path d="M0 0h12l-6 6.400z" fill="#a6a6a6"/></svg>
<svg style="position:absolute;left:1132px;top:264.8px;" width="19.3" height="19.3" viewBox="0 0 19.3 19.3"><path d="M9.650 0v19.300M0 9.650h19.300" stroke="#000" stroke-width="4.500"/></svg>
<svg style="position:absolute;left:1163.5px;top:272.3px;" width="12" height="6.4" viewBox="0 0 12 6.4"><path d="M0 0h12l-6 6.400z" fill="#6f6f6f"/></svg>
<svg style="position:absolute;left:1213.3px;top:264.8px;" width="19.4" height="19.4" viewBox="0 0 19.4 19.4"><rect x=".800" y=".800" width="17.800" height="17.800" fill="none" stroke="#707070" stroke-width="1.600"/><path d="M6.700 0v19.400M12.700 0v19.400M0 6.700h19.400M0 12.700h19.400" stroke="#707070" stroke-width="1.500"/></svg>
<svg style="position:absolute;left:1245.0px;top:272.3px;" width="12" height="6.4" viewBox="0 0 12 6.4"><path d="M0 0h12l-6 6.400z" fill="#b0b0b0"/></svg>
<div style="position:absolute;left:222px;top:1567px;width:1732px;height:41px;background:#e4e4e4;border-top:1px solid #bcbcbc;border-radius:0 0 5px 5px"></div>
<!-- p_palette -->
<div style="position:absolute;left:222px;top:304px;width:252px;height:1263px;background:#fafafa"></div>
<div style="position:absolute;left:472.3px;top:304px;width:25.7px;height:1263px;background:#f1f1f1"></div>
<div style="position:absolute;left:474.2px;top:330px;width:20.7px;height:1126px;background:#c1c1c1"></div>
<svg style="position:absolute;left:478.8px;top:315px;" width="11.2" height="6.3" viewBox="0 0 11.2 6.3"><path d="M0 6.300l5.600-6.300 5.600 6.300z" fill="#a3a3a3"/></svg>
<svg style="position:absolute;left:478.8px;top:1551px;" width="11.2" height="6.3" viewBox="0 0 11.2 6.3"><path d="M0 0l5.600 6.300 5.600-6.300z" fill="#505050"/></svg>
<div style="position:absolute;left:496px;top:304px;width:21px;height:1263px;background:#fafafa"></div>
<div style="position:absolute;left:504.8px;top:931px;width:1.4px;height:10px;background:#666"></div>
<div style="position:absolute;left:508.3px;top:931px;width:1.4px;height:10px;background:#666"></div>
<div style="position:absolute;left:234px;top:326px;width:226px;height:41px;background:#fff;border:1px solid #d6d6d6;border-radius:6px"></div>
<span class="t" style="left:244.0px;top:337.0px;font-size:18px;color:#757575;">Formen suchen</span>
<svg style="position:absolute;left:433px;top:334.8px;" width="18.5" height="18.5" viewBox="0 0 18.5 18.5"><circle cx="7" cy="7" r="5.300" fill="none" stroke="#8c8c8c" stroke-width="2.600"/><path d="M11 11l5.500 5.500" stroke="#8c8c8c" stroke-width="3.600" stroke-linecap="round"/></svg>
<div style="position:absolute;left:222px;top:391px;width:250px;height:1px;background:#e3e3e3"></div>
<svg style="position:absolute;left:224.8px;top:413px;" width="12.7" height="6.6" viewBox="0 0 12.7 6.6"><path d="M0 0h12.700l-6.350 6.600z" fill="#9a9a9a"/></svg>
<span class="t" style="left:243.0px;top:408.0px;font-size:19.5px;color:#000;">Allgemein</span>
<div style="position:absolute;left:222px;top:443px;width:250px;height:1px;background:#e3e3e3"></div>
<svg style="position:absolute;left:0px;top:0px;" width="500" height="920" viewBox="0 0 500 920"><path d="M242.800 468h43.200v22h-43.200z" fill="#fff" stroke="#000" stroke-width="1.6" stroke-linejoin="miter" /><rect x="296.800" y="468" width="43.400" height="22" rx="3.200" fill="#fff" stroke="#000" stroke-width="1.6"/><ellipse cx="264.400" cy="529.900" rx="21.600" ry="14.400" fill="#fff" stroke="#000" stroke-width="1.6"/><path d="M297.900 509.600h41.500v41.200h-41.500z" fill="#fff" stroke="#000" stroke-width="1.6" stroke-linejoin="miter" /><circle cx="372.650" cy="530.150" r="20.600" fill="#fff" stroke="#000" stroke-width="1.6"/><path d="M404.800 519h43.400v22h-43.400zM409.400 519v22M443.600 519v22" fill="#fff" stroke="#000" stroke-width="1.6" stroke-linejoin="miter" /><path d="M264.700 560.900l20.200 20.200-20.200 20.200-20.200-20.200z" fill="#fff" stroke="#000" stroke-width="1.6" stroke-linejoin="miter" /><path d="M305.500 570.100h34.800l-9.200 21.700h-34.400z" fill="#fff" stroke="#000" stroke-width="1.6" stroke-linejoin="miter" /><path d="M361.600 566.700h21.700l10.700 14.400-10.700 14.400h-21.700l-10.400-14.400z" fill="#fff" stroke="#000" stroke-width="1.6" stroke-linejoin="miter" /><path d="M411.100 561.300l30.300 20.200-30.300 20.300z" fill="#fff" stroke="#000" stroke-width="1.6" stroke-linejoin="miter" /><path d="M249.200 618.800v26.500c0 4 6.900 7.200 15.450 7.200s15.450-3.200 15.450-7.200v-26.500c0-4-6.900-7.200-15.450-7.200s-15.450 3.200-15.450 7.200c0 4 6.900 7.200 15.450 7.200s15.450-3.200 15.450-7.200" fill="#fff" stroke="#000" stroke-width="1.6" stroke-linejoin="miter" /><g transform="translate(299.700 0) scale(1.090 1) translate(-299.700 0)"><path d="M306.700 625.400c-4.500-.3-7.200 2-7 4.500 .1 1.700 1.800 3 4.500 3.300-3.500 .7-4.500 3.500-2.500 5.500 1.500 1.500 4 1.800 6.500 1.200 2 3 5.500 4.600 9.500 4.600 3.700 0 7.300-1.500 9.500-4.500 3.500 .3 7-1 7.500-3.500 .4-2.100-.8-4-3-5.300 1.700-1.500 2-3.800 .5-5.700-1.800-2.400-5.700-3.200-9.300-2-1.500-2.300-4.500-3.500-8-3.200-3.500 .3-6.500 2.200-8.200 5.100z" fill="#fff" stroke="#000" stroke-width="1.6" stroke-linejoin="miter" /></g><path d="M350.800 617.400h43.400v25.600c-3-1.700-6-3.200-10-3.200-9 0-14 7.500-23 7.500-4 0-7.500-1.700-10.400-4z" fill="#fff" stroke="#000" stroke-width="1.6" stroke-linejoin="miter" /><path d="M405.800 611.600h41.300v41.100h-41.300zM416.700 611.600v41.100M405.800 621.900h41.300" fill="#fff" stroke="#000" stroke-width="1.6" stroke-linejoin="miter" /><path d="M242.800 668.500h36.500l7.300 7.300v21.800h-36.400l-7.400-7.300z" fill="#fff" stroke="#000" stroke-width="1.6" stroke-linejoin="miter" /><path d="M242.800 668.500h36.500l7.300 7.300h-36.400z" fill="#ebebeb" stroke="#000" stroke-width="1.6" stroke-linejoin="miter" /><path d="M242.800 668.500l7.400 7.300v21.800l-7.400-7.300z" fill="#e4e4e4" stroke="#000" stroke-width="1.6" stroke-linejoin="miter" /><path d="M296.900 669.100h36.300l7.100 14.100-7.100 14.100h-36.300l7.200-14.100z" fill="#fff" stroke="#000" stroke-width="1.6" stroke-linejoin="miter" /><path d="M359.900 672.300h25.300l8.900 21.400h-42.900z" fill="#fff" stroke="#000" stroke-width="1.6" stroke-linejoin="miter" /><path d="M405.100 672.500c6.800 8.500 13.300 8.500 21.700 0 8.500-9.500 15-9.500 21.400 0v21.500c-6.400-9.500-12.900-9.500-21.400 0-8.400 8.500-14.900 8.500-21.700 0z" fill="#fff" stroke="#000" stroke-width="1.6" stroke-linejoin="miter" /><path d="M248.400 713.500h20.500l12.100 12.100v28.400h-32.600z" fill="#fff" stroke="#000" stroke-width="1.6" stroke-linejoin="miter" /><path d="M268.900 713.500l12.100 12.100h-12.100z" fill="#ebebeb" stroke="#000" stroke-width="1.6" stroke-linejoin="miter" /><path d="M314.700 713.500h20.300v40.500h-32.900v-28z" fill="#fff" stroke="#000" stroke-width="1.6" stroke-linejoin="miter" /><path d="M350.800 719.600h43.400v18h-15.200l-6.700 10.500v-10.500h-21.500z" fill="#fff" stroke="#000" stroke-width="1.6" stroke-linejoin="miter" /><circle cx="426.200" cy="718.700" r="5.200" fill="#fff" stroke="#000" stroke-width="1.6"/><path d="M426.200 724v17M416.300 727h20.100M416.300 753.800l9.900-12.800 10.200 12.800" fill="none" stroke="#000" stroke-width="1.6" stroke-linejoin="miter" /><path d="M249.800 764.600c18 0 30 7.500 30 20.500 0 12.500-12 20.300-30 20.300 9.500-14 9.500-27 0-40.800z" fill="#fff" stroke="#000" stroke-width="1.6" stroke-linejoin="miter" /><path d="M303.500 764.600c18 0 30.200 7.500 30.200 20.500 0 12.500-12.200 20.300-30.200 20.300z" fill="#fff" stroke="#000" stroke-width="1.6" stroke-linejoin="miter" /><path d="M355 767.500h39.600c-5 11.500-5 22.500 0 34.200h-39.600c-5-11.700-5-22.700 0-34.200z" fill="#fff" stroke="#000" stroke-width="1.6" stroke-linejoin="miter" /><path d="M407.200 805.800c16 0 27-2.500 26.500-9.500-.5-8-14-14-14-21.500 0-5.500 8-7.500 20-7.500" fill="none" stroke="#000" stroke-width="1.7000000000000002" stroke-linejoin="miter" /><path d="M446.300 767.300l-9.500-4.500 2.500 4.500-2.500 4.500z" fill="#000" stroke="#000" stroke-width="1"/><path d="M243.600 856.800l2.400-20.300 6 6.300 17.700-17.400-5.300-5.600 20.700-2.200-2.200 20-5.900-6.200-17.600 17.300 6.400 6.600z" fill="#fff" stroke="#000" stroke-width="1.6" stroke-linejoin="miter" /><path d="M298.200 851.200l27.500-26.500-5.300-5.600 18.900-2.100-2 19.300-5.500-5.800-27.800 26.400z" fill="#fff" stroke="#000" stroke-width="1.6" stroke-linejoin="miter" /><path d="M352.500 854.200l38.500-39.500M354.800 856.500l38.500-39.500" fill="none" stroke="#000" stroke-width="1.5" stroke-linejoin="miter" /><path d="M405.600 854.800l39.100-38.800" fill="none" stroke="#000" stroke-width="1.8" stroke-linejoin="miter" stroke-dasharray="1.900 3.100"/><path d="M243.900 906.200l39.800-40" fill="none" stroke="#000" stroke-width="1.6" stroke-linejoin="miter" /><path d="M305.500 899.500l25.500-25.800" fill="none" stroke="#000" stroke-width="1.6" stroke-linejoin="miter" /><path d="M302.100 902.800l3.300-8.300 1.600 3.400 3.400 1.600zM334.500 870.400l-3.300 8.300-1.600-3.400-3.400-1.600z" fill="#000" stroke="#000" stroke-width="1"/><path d="M356.400 902.200l28.700-28.700" fill="none" stroke="#000" stroke-width="1.6" stroke-linejoin="miter" /><path d="M388.600 870.200l-3.300 8.300-1.600-3.400-3.400-1.600z" fill="#000" stroke="#000" stroke-width="1"/></svg>
<span class="t" style="left:359.0px;top:470.0px;font-size:13.3px;color:#000;">Text</span>
<span class="t"  style="left:266.2px;top:460.3px;width:300px;text-align:center;font-size:20.0px;color:#222;font-weight:700;transform:scale(0.270);transform-origin:50% 50%">Heading</span>
<span class="t" style="left:405.6px;top:470.3px;width:300px;text-align:left;font-size:20.0px;color:#555;transform:scale(0.135);transform-origin:0 50%">Lorem ipsum dolor sit amet,</span>
<span class="t" style="left:405.6px;top:473.3px;width:300px;text-align:left;font-size:20.0px;color:#555;transform:scale(0.135);transform-origin:0 50%">consectetur adipisicing elit, sed</span>
<span class="t" style="left:405.6px;top:476.3px;width:300px;text-align:left;font-size:20.0px;color:#555;transform:scale(0.135);transform-origin:0 50%">do eiusmod tempor incididunt ut</span>
<span class="t" style="left:405.6px;top:479.3px;width:300px;text-align:left;font-size:20.0px;color:#555;transform:scale(0.135);transform-origin:0 50%">labore et dolore magna aliqua.</span>
<div style="position:absolute;left:222px;top:921px;width:250px;height:1px;background:#e3e3e3"></div>
<svg style="position:absolute;left:224.8px;top:943.5px;" width="12.7" height="6.6" viewBox="0 0 12.7 6.6"><path d="M0 0h12.700l-6.350 6.600z" fill="#9a9a9a"/></svg>
<span class="t" style="left:243.0px;top:938.0px;font-size:19.5px;color:#000;">Textmarken</span>
<div style="position:absolute;left:222px;top:973px;width:250px;height:1px;background:#e3e3e3"></div>
<span class="t" style="left:113.7px;top:998.3px;width:300px;text-align:center;font-size:20.0px;color:#2c2c2c;transform:scale(0.260);transform-origin:50% 50%">[Dokumententitel]</span>
<span class="t" style="left:167.8px;top:998.3px;width:300px;text-align:center;font-size:20.0px;color:#2c2c2c;transform:scale(0.195);transform-origin:50% 50%">[Einrichtungsbezeichnung]</span>
<span class="t" style="left:221.9px;top:998.3px;width:300px;text-align:center;font-size:20.0px;color:#2c2c2c;transform:scale(0.260);transform-origin:50% 50%">[Dokumentenart]</span>
<span class="t" style="left:276.0px;top:998.3px;width:300px;text-align:center;font-size:20.0px;color:#2c2c2c;transform:scale(0.260);transform-origin:50% 50%">[Revision]</span>
<span class="t" style="left:113.7px;top:1049.3px;width:300px;text-align:center;font-size:20.0px;color:#2c2c2c;transform:scale(0.230);transform-origin:50% 50%">[Dokumentennummer]</span>
<span class="t" style="left:167.8px;top:1049.3px;width:300px;text-align:center;font-size:20.0px;color:#2c2c2c;transform:scale(0.260);transform-origin:50% 50%">[Dateiname]</span>
<span class="t" style="left:221.9px;top:1049.3px;width:300px;text-align:center;font-size:20.0px;color:#2c2c2c;transform:scale(0.260);transform-origin:50% 50%">[Autor]</span>
<span class="t" style="left:276.0px;top:1049.3px;width:300px;text-align:center;font-size:20.0px;color:#2c2c2c;transform:scale(0.260);transform-origin:50% 50%">[Prüfer]</span>
<span class="t" style="left:113.7px;top:1100.3px;width:300px;text-align:center;font-size:20.0px;color:#2c2c2c;transform:scale(0.260);transform-origin:50% 50%">[Freigeber]</span>
<span class="t" style="left:167.8px;top:1100.3px;width:300px;text-align:center;font-size:20.0px;color:#2c2c2c;transform:scale(0.215);transform-origin:50% 50%">[Änderungskommentar]</span>
<span class="t" style="left:221.9px;top:1100.3px;width:300px;text-align:center;font-size:20.0px;color:#2c2c2c;transform:scale(0.260);transform-origin:50% 50%">[Stand]</span>
<span class="t" style="left:276.0px;top:1100.3px;width:300px;text-align:center;font-size:20.0px;color:#2c2c2c;transform:scale(0.260);transform-origin:50% 50%">[Erstelldatum]</span>
<span class="t" style="left:113.7px;top:1151.3px;width:300px;text-align:center;font-size:20.0px;color:#2c2c2c;transform:scale(0.260);transform-origin:50% 50%">[Prüfdatum]</span>
<span class="t" style="left:167.8px;top:1151.3px;width:300px;text-align:center;font-size:20.0px;color:#2c2c2c;transform:scale(0.260);transform-origin:50% 50%">[Freigabedatum]</span>
<span class="t" style="left:221.9px;top:1151.3px;width:300px;text-align:center;font-size:20.0px;color:#2c2c2c;transform:scale(0.260);transform-origin:50% 50%">[Prüfintervall]</span>
<span class="t" style="left:276.0px;top:1151.3px;width:300px;text-align:center;font-size:20.0px;color:#2c2c2c;transform:scale(0.260);transform-origin:50% 50%">[Gültigkeitsende]</span>
<div style="position:absolute;left:237.5px;top:1186.5px;width:54px;height:51px;background:#dedede;border-radius:9px"></div>
<svg style="position:absolute;left:246px;top:1192px;" width="35.5" height="40" viewBox="0 0 32 36"><defs><linearGradient id="skyp" x1="0" y1="0" x2="0" y2="1"><stop offset="0" stop-color="#eaf0fc"/><stop offset=".45" stop-color="#c7d5f0"/><stop offset="1" stop-color="#dbe4f6"/></linearGradient></defs><path d="M0 0h22.300l9.700 10.700v25.300h-32z" fill="#929292"/><path d="M2.400 2.600h18.600v9.600h8.600v21.400h-27.200z" fill="url(#skyp)"/><path d="M23.300 3.800l5.300 5.900h-5.300z" fill="#f3f3f3"/><path d="M4.700 12.900c-.3-1.800 1.500-2.900 3-2.300 .6-2.600 2.500-4.500 4.200-4.500 1.800 0 3.300 1.600 3.500 3.500 1.300 .2 1.500 2 .7 3.300z" fill="#fff"/><path d="M2.400 33.600c1.600-7.200 6.600-12 12.600-12 4 0 8 2.200 11 6l3.600 3.400v2.600z" fill="#6daa4c"/><path d="M13.400 36l18.600-17.900v6.300l-11.400 11.600z" fill="#dedede"/></svg>
<div style="position:absolute;left:234px;top:1181px;width:67px;height:62px;border:3px solid #0e9d8f"></div>
<div style="position:absolute;left:222px;top:1247px;width:250px;height:1px;background:#e3e3e3"></div>
<div style="position:absolute;left:222px;top:1299px;width:250px;height:1px;background:#e3e3e3"></div>
<div style="position:absolute;left:222px;top:1352px;width:250px;height:1px;background:#e3e3e3"></div>
<div style="position:absolute;left:222px;top:1404px;width:250px;height:1px;background:#e3e3e3"></div>
<div style="position:absolute;left:222px;top:1456px;width:250px;height:1px;background:#e3e3e3"></div>
<div style="position:absolute;left:222px;top:1509px;width:250px;height:1px;background:#e3e3e3"></div>
<div style="position:absolute;left:222px;top:1561px;width:250px;height:1px;background:#e3e3e3"></div>
<svg style="position:absolute;left:228.3px;top:1266.6px;" width="7" height="13.2" viewBox="0 0 7 13.2"><path d="M0 0v13.200l7-6.600z" fill="#9a9a9a"/></svg>
<span class="t" style="left:243.0px;top:1264.0px;font-size:19.5px;color:#000;">Verschiedenes</span>
<svg style="position:absolute;left:228.3px;top:1318.6px;" width="7" height="13.2" viewBox="0 0 7 13.2"><path d="M0 0v13.200l7-6.600z" fill="#9a9a9a"/></svg>
<span class="t" style="left:243.0px;top:1316.0px;font-size:19.5px;color:#000;">Erweitert</span>
<svg style="position:absolute;left:228.3px;top:1371.6px;" width="7" height="13.2" viewBox="0 0 7 13.2"><path d="M0 0v13.200l7-6.600z" fill="#9a9a9a"/></svg>
<span class="t" style="left:243.0px;top:1369.0px;font-size:19.5px;color:#000;">Einfach</span>
<svg style="position:absolute;left:228.3px;top:1423.6px;" width="7" height="13.2" viewBox="0 0 7 13.2"><path d="M0 0v13.200l7-6.600z" fill="#9a9a9a"/></svg>
<span class="t" style="left:243.0px;top:1421.0px;font-size:19.5px;color:#000;">Pfeile</span>
<svg style="position:absolute;left:228.3px;top:1475.6px;" width="7" height="13.2" viewBox="0 0 7 13.2"><path d="M0 0v13.200l7-6.600z" fill="#9a9a9a"/></svg>
<span class="t" style="left:243.0px;top:1473.0px;font-size:19.5px;color:#000;">UML</span>
<svg style="position:absolute;left:228.3px;top:1528.6px;" width="7" height="13.2" viewBox="0 0 7 13.2"><path d="M0 0v13.200l7-6.600z" fill="#9a9a9a"/></svg>
<span class="t" style="left:243.0px;top:1526.0px;font-size:19.5px;color:#000;">BPMN Allgemein</span>
<svg style="position:absolute;left:274.5px;top:1227px;" width="20" height="28" viewBox="0 0 20 28"><path d="M1 1v20.500l4.800-4.500 3.700 8.700 3.700-1.600-3.700-8.500h6.700z" fill="#fff" stroke="#000" stroke-width="1.300" stroke-linejoin="round"/></svg>
<!-- p_canvas -->
<div style="position:absolute;left:516px;top:304px;width:1055px;height:1240px;background:#f6f7f9;border-left:1px solid #dfe1e6"></div>
<div style="position:absolute;left:533px;top:389px;width:994px;height:1154px;background-color:#fff;background-image:linear-gradient(to right,#dedede 1px,transparent 1px),linear-gradient(to bottom,#dedede 1px,transparent 1px),linear-gradient(to right,#f8f8f8 1px,transparent 1px),linear-gradient(to bottom,#f8f8f8 1px,transparent 1px);background-size:24px 24px,24px 24px,6px 6px,6px 6px;background-position:-1px -1px;box-shadow:0 0 3px 1px rgba(0,0,0,.16)"></div>
<div style="position:absolute;left:533px;top:389px;width:994px;height:97px;background:#fff"></div>
<svg style="position:absolute;left:0px;top:0px;pointer-events:none" width="1600" height="1600" viewBox="0 0 1600 1600"><g fill="none" stroke="#000" stroke-width="1.5"><rect x="533.600" y="389.750" width="992.300" height="95.400"/><path d="M743.500 389.750v95.400M1316.100 389.750v95.400"/><rect x="533.600" y="1440" width="992.300" height="71.300" fill="#fff"/><path d="M857.400 1440v71.300M1184.900 1440v71.300"/></g></svg>
<svg style="position:absolute;left:608.8px;top:403.8px;" width="58.4" height="65.8" viewBox="0 0 32 36"><defs><linearGradient id="skyh" x1="0" y1="0" x2="0" y2="1"><stop offset="0" stop-color="#eaf0fc"/><stop offset=".45" stop-color="#c7d5f0"/><stop offset="1" stop-color="#dbe4f6"/></linearGradient></defs><path d="M0 0h22.300l9.700 10.700v25.300h-32z" fill="#929292"/><path d="M2.400 2.600h18.600v9.600h8.600v21.400h-27.200z" fill="url(#skyh)"/><path d="M23.300 3.800l5.300 5.900h-5.300z" fill="#f3f3f3"/><path d="M4.700 12.900c-.3-1.800 1.500-2.900 3-2.300 .6-2.600 2.500-4.500 4.200-4.500 1.800 0 3.300 1.600 3.500 3.500 1.300 .2 1.500 2 .7 3.300z" fill="#fff"/><path d="M2.400 33.600c1.600-7.200 6.600-12 12.600-12 4 0 8 2.200 11 6l3.600 3.400v2.600z" fill="#6daa4c"/><path d="M13.400 36l18.600-17.900v6.300l-11.400 11.600z" fill="#fff"/></svg>
<div style="position:absolute;left:601px;top:392px;width:79px;height:86.5px;border:3px solid #0e9d8f"></div>
<span class="t" style="left:929.6px;top:418.0px;font-size:16.8px;color:#000;">[Einrichtungsbezeichnung]</span>
<span class="t" style="left:949.5px;top:438.0px;font-size:19.2px;color:#000;font-weight:700;">[Dokumententitel]</span>
<span class="t" style="left:1323.6px;top:411.0px;font-size:14.4px;color:#000;">Revision:</span>
<span class="t" style="left:1449.7px;top:413.0px;font-size:16.8px;color:#000;">[Revision]</span>
<span class="t" style="left:1324.3px;top:442.0px;font-size:14.4px;color:#000;">Erstelldatum:</span>
<span class="t" style="left:1420.8px;top:440.0px;font-size:16.8px;color:#000;">[Erstelldatum]</span>
<span class="t" style="left:537.7px;top:1461.0px;font-size:14.4px;color:#000;">Erstellt durch:</span>
<span class="t" style="left:537.7px;top:1475.0px;font-size:14.4px;color:#000;">am:</span>
<span class="t" style="left:637.0px;top:1459.0px;font-size:14.4px;color:#000;">[Autor]</span>
<span class="t" style="left:637.0px;top:1475.0px;font-size:14.4px;color:#000;">[Erstelldatum]</span>
<span class="t" style="left:861.7px;top:1461.0px;font-size:14.4px;color:#000;">Prüfung durch:</span>
<span class="t" style="left:861.7px;top:1475.0px;font-size:14.4px;color:#000;">am:</span>
<span class="t" style="left:961.0px;top:1459.0px;font-size:14.4px;color:#000;">[Prüfer]</span>
<span class="t" style="left:961.0px;top:1475.0px;font-size:14.4px;color:#000;">[Prüfdatum]</span>
<span class="t" style="left:1189.3px;top:1461.0px;font-size:14.4px;color:#000;">Freigabe durch:</span>
<span class="t" style="left:1189.3px;top:1475.0px;font-size:14.4px;color:#000;">am:</span>
<span class="t" style="left:1294.5px;top:1459.0px;font-size:14.4px;color:#000;">[Freigeber]</span>
<span class="t" style="left:1294.5px;top:1475.0px;font-size:14.4px;color:#000;">[Freigabedatum]</span>
<div style="position:absolute;left:1571px;top:304px;width:24px;height:1240px;background:#f1f1f1"></div>
<div style="position:absolute;left:1573px;top:680px;width:20.5px;height:384px;background:#c1c1c1"></div>
<svg style="position:absolute;left:1577.5px;top:315px;" width="11.2" height="6.3" viewBox="0 0 11.2 6.3"><path d="M0 6.300l5.600-6.300 5.600 6.300z" fill="#505050"/></svg>
<svg style="position:absolute;left:1578px;top:1527px;" width="11.2" height="6.3" viewBox="0 0 11.2 6.3"><path d="M0 0l5.600 6.300 5.600-6.300z" fill="#505050"/></svg>
<div style="position:absolute;left:517px;top:1542.7px;width:1054px;height:24.3px;background:#f1f1f1"></div>
<div style="position:absolute;left:873px;top:1545.7px;width:348px;height:19.8px;background:#c1c1c1"></div>
<svg style="position:absolute;left:523.8px;top:1550px;" width="6.3" height="11.2" viewBox="0 0 6.3 11.2"><path d="M6.300 0l-6.300 5.600 6.300 5.600z" fill="#505050"/></svg>
<svg style="position:absolute;left:1555.8px;top:1550px;" width="6.3" height="11.2" viewBox="0 0 6.3 11.2"><path d="M0 0l6.300 5.600-6.300 5.600z" fill="#505050"/></svg>
<div style="position:absolute;left:1571px;top:1543.5px;width:24px;height:23.5px;background:#dedede"></div>
<div style="position:absolute;left:499px;top:1098px;width:140px;height:223.6px;background:#fafafa;border:3px solid #0e9d8f;box-shadow:0 0 6px rgba(0,0,0,.12)"></div>
<svg style="position:absolute;left:522px;top:1128px;" width="79" height="89.5" viewBox="0 0 32 36"><defs><linearGradient id="skyt" x1="0" y1="0" x2="0" y2="1"><stop offset="0" stop-color="#eaf0fc"/><stop offset=".45" stop-color="#c7d5f0"/><stop offset="1" stop-color="#dbe4f6"/></linearGradient></defs><path d="M0 0h22.300l9.700 10.700v25.300h-32z" fill="#929292"/><path d="M2.400 2.600h18.600v9.600h8.600v21.400h-27.200z" fill="url(#skyt)"/><path d="M23.300 3.800l5.300 5.900h-5.300z" fill="#f3f3f3"/><path d="M4.700 12.900c-.3-1.800 1.500-2.900 3-2.300 .6-2.600 2.500-4.500 4.200-4.500 1.800 0 3.300 1.600 3.500 3.500 1.300 .2 1.500 2 .7 3.300z" fill="#fff"/><path d="M2.400 33.600c1.600-7.200 6.600-12 12.600-12 4 0 8 2.200 11 6l3.600 3.400v2.600z" fill="#6daa4c"/><path d="M13.400 36l18.600-17.900v6.300l-11.400 11.600z" fill="#fafafa"/></svg>
<div style="position:absolute;left:496px;top:1251px;width:139px;height:1.2px;background:#7a7a7a"></div>
<span class="t" style="left:523.7px;top:1264.0px;font-size:19.8px;color:#000;letter-spacing:0.61px;">Logo der</span>
<span class="t" style="left:512.8px;top:1288.0px;font-size:19.8px;color:#000;letter-spacing:0.46px;">Einrichtung</span>
<!-- p_panel -->
<div style="position:absolute;left:1595px;top:304px;width:359px;height:1263px;background:#fbfbfb;border-left:1px solid #d6d9e0"></div>
<span class="t" style="left:1728.3px;top:319.0px;font-size:19.5px;color:#6e6e6e;font-weight:700;">Diagramm</span>
<svg style="position:absolute;left:1915px;top:321.5px;" width="13" height="12.5" viewBox="0 0 13 12.5"><path d="M1 1l11 10.500M12 1l-11 10.500" stroke="#b4c2d6" stroke-width="2.600"/></svg>
<div style="position:absolute;left:1596px;top:354px;width:358px;height:1px;background:#dcdfe8"></div>
<span class="t" style="left:1623.0px;top:379.0px;font-size:18px;color:#6e6e6e;font-weight:700;">Ansicht</span>
<div style="position:absolute;left:1623px;top:417.3px;width:19.5px;height:19.5px;background:#2f6fed;border-radius:3.500px"></div><svg style="position:absolute;left:1623px;top:417.3px;" width="19.5" height="19.5" viewBox="0 0 19.5 19.5"><path d="M4.300 10.200l3.700 3.700 7.200-8.300" fill="none" stroke="#fff" stroke-width="2.600" stroke-linecap="butt"/></svg>
<span class="t" style="left:1652.0px;top:422.0px;font-size:18px;color:#6e6e6e;">Gitternetz</span>
<div style="position:absolute;left:1761px;top:414.5px;width:69px;height:29px;background:#fff;border:2.500px solid;border-color:#1d1d1d #8a8a8a #8a8a8a #1d1d1d"></div>
<span class="t" style="left:1791.8px;top:419.0px;font-size:19px;color:#000;">5 pt</span>
<div style="position:absolute;left:1831.5px;top:418.5px;width:16px;height:26px;background:#f4f4f4;border:1px solid #d5d5d5;border-radius:4px"></div>
<svg style="position:absolute;left:1834.5px;top:422.5px;" width="10" height="18" viewBox="0 0 10 18"><path d="M0 6l5-5.500 5 5.500z" fill="#cfcfcf" stroke="#9b9b9b" stroke-width=".8"/><path d="M0 12l5 5.500 5-5.500z" fill="#cfcfcf" stroke="#9b9b9b" stroke-width=".800"/></svg>
<div style="position:absolute;left:1859px;top:411.5px;width:67px;height:32px;background:#efefef;border:1.500px solid #8f8f8f;border-radius:5px"></div>
<div style="position:absolute;left:1865px;top:418.5px;width:56px;height:19px;background:#c9c9c9;border:1.500px solid #222"></div>
<div style="position:absolute;left:1623px;top:455px;width:19.5px;height:19.5px;background:#2f6fed;border-radius:3.500px"></div><svg style="position:absolute;left:1623px;top:455px;" width="19.5" height="19.5" viewBox="0 0 19.5 19.5"><path d="M4.300 10.200l3.700 3.700 7.200-8.300" fill="none" stroke="#fff" stroke-width="2.600" stroke-linecap="butt"/></svg>
<span class="t" style="left:1652.0px;top:460.0px;font-size:18px;color:#6e6e6e;">Seitenansicht</span>
<div style="position:absolute;left:1623px;top:492px;width:19.5px;height:19.5px;background:#fff;border:1.500px solid #767676;border-radius:3.500px"></div>
<span class="t" style="left:1652.0px;top:497.0px;font-size:18px;color:#6e6e6e;">Hintergrund</span>
<div style="position:absolute;left:1764px;top:486.5px;width:84px;height:32px;background:linear-gradient(#f4f4f4,#e3e3e3);border:1.500px solid #9a9a9a;border-radius:5px"></div>
<span class="t" style="left:1791.0px;top:492.0px;font-size:18px;color:#222;">Bild</span>
<div style="position:absolute;left:1596px;top:539px;width:358px;height:1px;background:#dcdfe8"></div>
<span class="t" style="left:1623.0px;top:559.0px;font-size:18px;color:#6e6e6e;font-weight:700;">Optionen</span>
<div style="position:absolute;left:1623px;top:597px;width:19.5px;height:19.5px;background:#2f6fed;border-radius:3.500px"></div><svg style="position:absolute;left:1623px;top:597px;" width="19.5" height="19.5" viewBox="0 0 19.5 19.5"><path d="M4.300 10.200l3.700 3.700 7.200-8.300" fill="none" stroke="#fff" stroke-width="2.600" stroke-linecap="butt"/></svg>
<span class="t" style="left:1652.0px;top:601.0px;font-size:18px;color:#6e6e6e;">Verbindungspfeile</span>
<div style="position:absolute;left:1623px;top:634.3px;width:19.5px;height:19.5px;background:#2f6fed;border-radius:3.500px"></div><svg style="position:absolute;left:1623px;top:634.3px;" width="19.5" height="19.5" viewBox="0 0 19.5 19.5"><path d="M4.300 10.200l3.700 3.700 7.200-8.300" fill="none" stroke="#fff" stroke-width="2.600" stroke-linecap="butt"/></svg>
<span class="t" style="left:1652.0px;top:639.0px;font-size:18px;color:#6e6e6e;">Verbindungspunkte</span>
<div style="position:absolute;left:1623px;top:672px;width:19.5px;height:19.5px;background:#2f6fed;border-radius:3.500px"></div><svg style="position:absolute;left:1623px;top:672px;" width="19.5" height="19.5" viewBox="0 0 19.5 19.5"><path d="M4.300 10.200l3.700 3.700 7.200-8.300" fill="none" stroke="#fff" stroke-width="2.600" stroke-linecap="butt"/></svg>
<span class="t" style="left:1652.0px;top:676.0px;font-size:18px;color:#6e6e6e;">Führungslinien</span>
<div style="position:absolute;left:1596px;top:718px;width:358px;height:1px;background:#dcdfe8"></div>
<span class="t" style="left:1623.0px;top:738.0px;font-size:18px;color:#6e6e6e;font-weight:700;">Papiergrösse</span>
<div style="position:absolute;left:1623px;top:767px;width:303px;height:24px;background:#fff;border:1.300px solid #555"></div>
<span class="t" style="left:1630.3px;top:770.0px;font-size:18px;color:#000;">A4 (210 mm x 297 mm)</span>
<svg style="position:absolute;left:1905.5px;top:775px;" width="13" height="8" viewBox="0 0 13 8"><path d="M1 1l5.500 5.500 5.500-5.500" fill="none" stroke="#111" stroke-width="2"/></svg>
<svg style="position:absolute;left:1637px;top:808px;" width="18.5" height="18.5" viewBox="0 0 18.5 18.5"><circle cx="9.250" cy="9.250" r="8.200" fill="#fff" stroke="#2f6fed" stroke-width="1.800"/><circle cx="9.250" cy="9.250" r="4.800" fill="#2f6fed"/></svg>
<span class="t" style="left:1665.5px;top:812.0px;font-size:18px;color:#6e6e6e;">Hochformat</span>
<svg style="position:absolute;left:1773.5px;top:808px;" width="18.5" height="18.5" viewBox="0 0 18.5 18.5"><circle cx="9.250" cy="9.250" r="8.300" fill="#fff" stroke="#767676" stroke-width="1.500"/></svg>
<span class="t" style="left:1801.8px;top:812.0px;font-size:18px;color:#6e6e6e;">Querformat</span>
<div style="position:absolute;left:1596px;top:857px;width:358px;height:1px;background:#dcdfe8"></div>
<div style="position:absolute;left:1623px;top:876.3px;width:303px;height:29.2px;background:#efefef;border:1.300px solid #6f6f6f;border-radius:4px"></div>
<span class="t" style="left:1686.9px;top:882.0px;font-size:18px;color:#000;">Metadaten bearbeiten</span>
<div style="position:absolute;left:1623px;top:909.3px;width:303px;height:29.2px;background:#efefef;border:1.300px solid #6f6f6f;border-radius:4px"></div>
<span class="t" style="left:1685.9px;top:915.0px;font-size:18px;color:#000;">Standardstyle löschen</span>
<div style="position:absolute;left:1596px;top:957px;width:358px;height:1px;background:#dcdfe8"></div>
</body>
</html>
